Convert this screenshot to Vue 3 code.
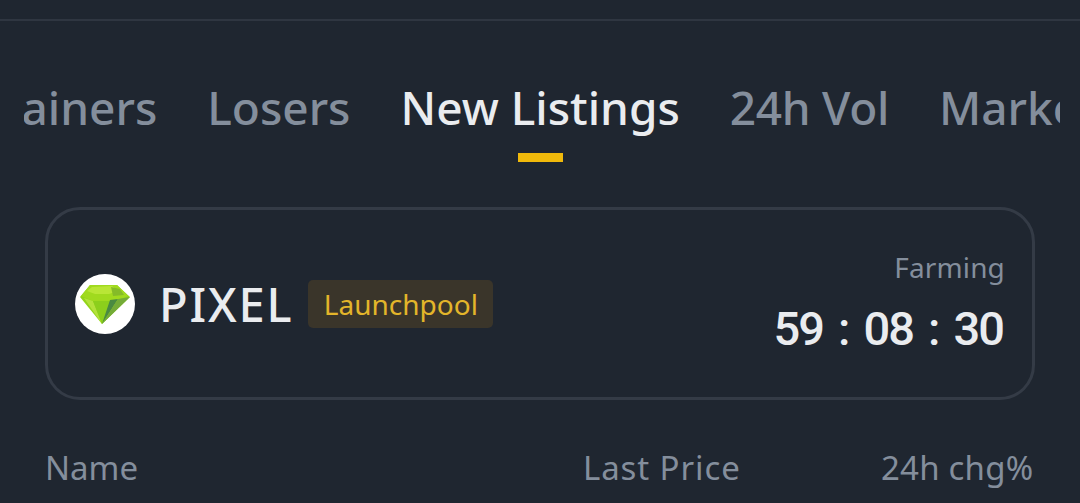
<script setup>
const tabs = [
  { label: 'Gainers' },
  { label: 'Losers' },
  { label: 'New Listings', active: true },
  { label: '24h Vol' },
  { label: 'Market Cap' },
]
</script>

<template>
  <div class="page">
    <div class="topbar"></div>
    <nav class="tabs">
      <div class="track">
        <div v-for="t in tabs" :key="t.label" class="tab" :class="{ active: t.active }">
          <span class="tab-label">{{ t.label }}</span>
          <span class="bar"></span>
        </div>
      </div>
    </nav>
    <section class="card">
      <div class="left">
        <span class="logo">
          <svg viewBox="0 0 60 60" width="60" height="60">
            <circle cx="30" cy="30" r="30" fill="#fff" />
            <g class="gem">
              <path d="M15 11 L42 11 L55 23 L27 50 L5 23 Z" fill="#93d41a" />
              <path d="M15 11 L42 11 L53 22 L40 27 L18 27 L6 22 Z" fill="#a0da1e" />
              <path d="M17 13 L37 12 L43 17 L34 20 L20 20 L12 17 Z" fill="#b9e636" />
              <path d="M36 13 L45 15 L49 21 L38 22 Z" fill="#85bb28" />
              <path d="M9 24 L18 27 L27 50 Z" fill="#b4e23c" />
              <path d="M18 27 L36 27 L27 50 Z" fill="#8ccf1c" />
              <path d="M35 26 L43 25 L27 50 Z" fill="#4a8a42" />
              <path d="M43 25 L55 23 L27 50 Z" fill="#74ab38" />
            </g>
          </svg>
        </span>
        <span class="symbol">PIXEL</span>
        <span class="tag">Launchpool</span>
      </div>
      <div class="right">
        <span class="status">Farming</span>
        <span class="timer">59 : 08 : 30</span>
      </div>
    </section>
    <div class="head">
      <span class="h-name">Name</span>
      <span class="h-price">Last Price</span>
      <span class="h-chg">24h chg%</span>
    </div>
  </div>
</template>

<style>
html, body { margin: 0; background: #1f2630; }
</style>

<style scoped>
.page {
  width: 1080px;
  height: 503px;
  overflow: hidden;
  background: #1f2630;
  font-family: "Noto Sans", Roboto, sans-serif;
  padding-top: 19px;
  box-sizing: border-box;
}
.topbar { height: 2px; background: #2f3641; }
.tabs {
  margin: 54px 20px 0 24px;
  overflow: hidden;
}
.track {
  display: flex;
  gap: 50px;
  margin-left: -36px;
  width: max-content;
}
.tab {
  display: flex;
  flex-direction: column;
  align-items: center;
  font-size: 46px;
  line-height: 64px;
  font-weight: 500;
  color: #848e9c;
}
.tab.active { color: #eaecef; }
.tab:nth-child(4) { letter-spacing: -0.3px; }
.bar { width: 45px; height: 9px; margin-top: 14px; background: transparent; }
.active .bar { background: #f0b90b; }
.card {
  margin: 45px 45px 0 45px;
  height: 193px;
  box-sizing: border-box;
  border: 3px solid #343b46;
  border-radius: 35px;
  padding: 0 27px;
  display: flex;
  align-items: center;
  justify-content: space-between;
}
.left { display: flex; align-items: center; }
.logo { width: 60px; height: 60px; display: block; margin-right: 24px; }
.logo svg { display: block; }
.gem { filter: blur(0.5px); }
.symbol { font-size: 47px; letter-spacing: 1.8px; font-weight: 500; color: #eaecef; line-height: 60px; }
.tag {
  margin-left: 15px;
  height: 48px;
  line-height: 48px;
  padding: 0 15.500px;
  background: #3a352a;
  border-radius: 5px;
  font-size: 28px;
  color: #e3b52a;
}
.right { display: flex; flex-direction: column; align-items: flex-end; }
.status { font-size: 28px; letter-spacing: 0.15px; line-height: 38px; color: #848e9c; }
.timer {
  font-family: Roboto, "Noto Sans", sans-serif;
  font-size: 47px;
  line-height: 60px;
  font-weight: 500;
  letter-spacing: -2px;
  word-spacing: 5.400px;
  color: #eaecef;
  margin-top: 13px;
  margin-right: 2px;
}
.head {
  margin: 48px 47px 0 45px;
  display: grid;
  grid-template-columns: 1fr 298px 152px;
  font-size: 33px;
  line-height: 40px;
  color: #848e9c;
}
.h-price { letter-spacing: 0.9px; }
.h-chg { text-align: right; white-space: nowrap; letter-spacing: 0.2px; }
</style>
